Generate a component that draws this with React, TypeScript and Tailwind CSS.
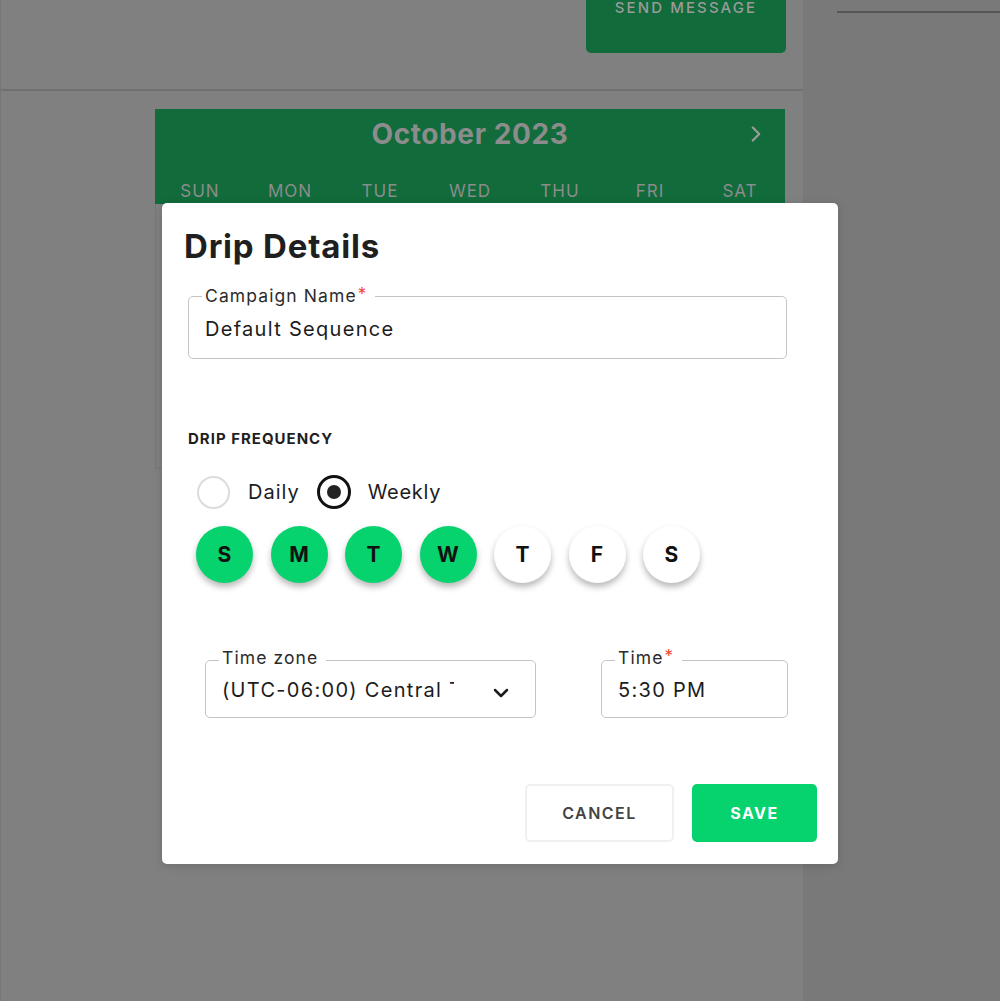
import React, { useState } from "react";
import { ChevronDown, ChevronRight } from "lucide-react";

const days = ["SUN", "MON", "TUE", "WED", "THU", "FRI", "SAT"];
const dayPicks = [
  { letter: "S", on: true },
  { letter: "M", on: true },
  { letter: "T", on: true },
  { letter: "W", on: true },
  { letter: "T", on: false },
  { letter: "F", on: false },
  { letter: "S", on: false },
];

function Required() {
  return <span className="text-[#f44336] text-[17px] align-top leading-none ml-[1px]">*</span>;
}

export default function App() {
  const [freq, setFreq] = useState("weekly");

  return (
    <div className="relative w-[1000px] h-[1001px] flex overflow-hidden font-['Inter','Roboto',sans-serif]">
      {/* page behind the overlay */}
      <main className="w-[803px] h-full bg-[#808080] border-l border-[#767676] flex flex-col">
        <div className="h-[89px] flex justify-end pr-[17px]">
          <button className="w-[200px] h-[53px] rounded-b-[5px] bg-[#116b3a] text-[#9a9a9a] text-[15px] font-medium tracking-[2.1px] leading-[16px] flex justify-center">
            SEND MESSAGE
          </button>
        </div>
        <div className="h-[2px] bg-[#707070]" />
        <section className="ml-[154px] mt-[18px] w-[630px]">
          <div className="bg-[#116b3a] h-[95px] flex flex-col">
            <div className="relative h-[50px] flex items-center justify-center">
              <span className="text-[28px] font-bold text-[#8c8c8c] tracking-[0.6px]">October 2023</span>
              <ChevronRight className="absolute right-[16px] top-[12px] text-[#9c9c9c]" size={26} strokeWidth={2} />
            </div>
            <div className="grid grid-cols-7 mt-[21px]">
              {days.map((d) => (
                <span key={d} className="text-center text-[17px] text-[#8c8c8c] leading-[22px] tracking-[1px]">
                  {d}
                </span>
              ))}
            </div>
          </div>
          <div className="h-[265px] border border-t-0 border-[#777777]" />
        </section>
      </main>
      <aside className="flex-1 h-full bg-[#797979] pl-[34px] pt-[11px]">
        <div className="h-[2px] bg-[#575757]" />
      </aside>

      {/* dialog */}
      <div className="absolute left-[162px] top-[203px] w-[676px] h-[661px] bg-white rounded-[5px] shadow-[0_2px_10px_rgba(0,0,0,0.15)] flex flex-col pl-[22px] pr-[21px] text-[#1c1c1c]">
        <h2 className="mt-[25px] text-[33px] leading-[36px] font-bold tracking-[0.8px] text-[#1f1f1f]">Drip Details</h2>

        <div className="relative mt-[32px] ml-[4px] w-[599px] h-[63px] border border-[#c4c4c4] rounded-[5px] pl-[16px] pt-[20px]">
          <span className="absolute left-[13px] top-[-11px] bg-white pl-[3px] pr-[8px] text-[17.5px] leading-[20px] tracking-[1.1px] text-[#2b2b2b]">
            Campaign Name<Required />
          </span>
          <span className="text-[20px] leading-[24px] tracking-[1.3px] text-[#1c1c1c]">Default Sequence</span>
        </div>

        <p className="mt-[70px] ml-[4px] text-[15px] leading-[20px] font-bold tracking-[1px] text-[#1f1f1f]">DRIP FREQUENCY</p>

        <div className="mt-[27px] ml-[13px] flex items-center h-[32px]">
          <button onClick={() => setFreq("daily")} className="flex items-center">
            <span
              className={
                freq === "daily"
                  ? "w-[33px] h-[33px] rounded-full border-[3px] border-[#111] flex items-center justify-center"
                  : "w-[33px] h-[33px] rounded-full border-[2px] border-[#dcdcdc]"
              }
            >
              {freq === "daily" && <span className="w-[14px] h-[14px] rounded-full bg-[#222]" />}
            </span>
            <span className="ml-[18px] text-[20px] tracking-[1px] text-[#1c1c1c]">Daily</span>
          </button>
          <button onClick={() => setFreq("weekly")} className="flex items-center ml-[17px]">
            <span
              className={
                freq === "weekly"
                  ? "w-[34px] h-[34px] rounded-full border-[3px] border-[#111] flex items-center justify-center"
                  : "w-[34px] h-[34px] rounded-full border-[2px] border-[#dcdcdc]"
              }
            >
              {freq === "weekly" && <span className="w-[14px] h-[14px] rounded-full bg-[#222]" />}
            </span>
            <span className="ml-[17px] text-[20px] tracking-[0.7px] text-[#1c1c1c]">Weekly</span>
          </button>
        </div>

        <div className="mt-[18px] ml-[12px] flex gap-[17.5px]">
          {dayPicks.map((d, i) => (
            <span
              key={i}
              className={
                d.on
                  ? "w-[57px] h-[57px] rounded-full bg-[#06d26e] shadow-[0_4px_6px_rgba(0,0,0,0.28)] flex items-center justify-center text-[21px] font-bold text-[#111]"
                  : "w-[57px] h-[57px] rounded-full bg-white shadow-[0_4px_6px_rgba(0,0,0,0.28)] flex items-center justify-center text-[21px] font-bold text-[#111]"
              }
            >
              {d.letter}
            </span>
          ))}
        </div>

        <div className="mt-[77px] ml-[21px] flex gap-[65px]">
          <div className="relative w-[331px] h-[58px] border border-[#c4c4c4] rounded-[5px] pl-[16px] flex items-center">
            <span className="absolute left-[13px] top-[-13px] bg-white pl-[3px] pr-[8px] text-[17.5px] leading-[20px] tracking-[1.1px] text-[#2b2b2b]">
              Time zone
            </span>
            <span className="mt-[2px] text-[20px] leading-[24px] tracking-[1.3px] text-[#1c1c1c] whitespace-nowrap overflow-hidden w-[232px]">
              (UTC-06:00) Central Time
            </span>
            <ChevronDown className="absolute left-[283px] top-[20px] text-[#1c1c1c]" size={24} strokeWidth={2.5} />
          </div>
          <div className="relative w-[187px] h-[58px] border border-[#c4c4c4] rounded-[5px] pl-[16px] flex items-center">
            <span className="absolute left-[13px] top-[-13px] bg-white pl-[3px] pr-[8px] text-[17.5px] leading-[20px] tracking-[1.1px] text-[#2b2b2b]">
              Time<Required />
            </span>
            <span className="mt-[2px] text-[20px] leading-[24px] tracking-[1.3px] text-[#1c1c1c]">5:30 PM</span>
          </div>
        </div>

        <div className="mt-[66px] flex justify-end gap-[18px]">
          <button className="w-[149px] h-[58px] rounded-[5px] border-2 border-[#f0f0f0] bg-white text-[16px] font-semibold tracking-[1.5px] text-[#444]">
            CANCEL
          </button>
          <button className="w-[125px] h-[58px] rounded-[5px] bg-[#06d26e] text-[16px] font-bold tracking-[1.5px] text-white">
            SAVE
          </button>
        </div>
      </div>
    </div>
  );
}
